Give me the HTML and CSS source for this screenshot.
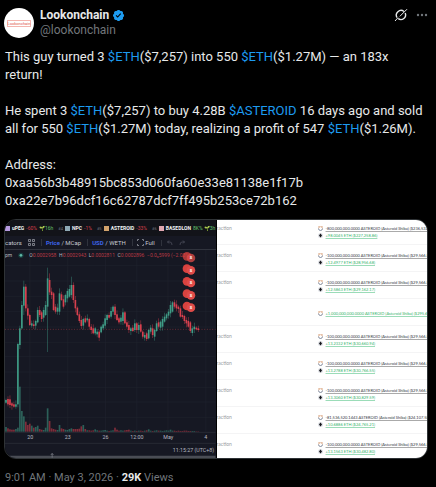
FILE: index.html
```
<!DOCTYPE html>
<html lang="en">
<head>
  <meta charset="UTF-8">
  <meta name="viewport" content="width=device-width, initial-scale=1.0">
  <title>Lookonchain</title>
  <link rel="stylesheet" href="styles.css">
</head>
<body>

  <article class="post">
    <header class="post-header">
      <a class="avatar" href="#"><span>Lookonchain</span></a>
      <div class="author">
        <a class="name" href="#">Lookonchain
          <svg class="verified" viewBox="0 0 22 22" aria-label="Verified account"><path fill="#1d9bf0" d="M20.4 11c0-.65-.18-1.28-.52-1.82-.34-.55-.83-.99-1.41-1.27.21-.6.26-1.26.13-1.9-.13-.63-.44-1.21-.88-1.69-.47-.44-1.05-.75-1.69-.88-.63-.13-1.29-.09-1.9.13-.27-.59-.71-1.08-1.26-1.42S11.71 1.62 11.07 1.6c-.65.02-1.28.2-1.82.55-.54.34-.98.83-1.25 1.42-.6-.22-1.26-.27-1.9-.13-.64.13-1.22.44-1.69.88-.45.48-.75 1.06-.88 1.69-.12.64-.08 1.3.14 1.9-.59.28-1.08.72-1.43 1.27-.34.54-.53 1.17-.55 1.82.02.65.21 1.28.55 1.83.35.54.84.98 1.43 1.26-.22.6-.26 1.26-.14 1.9.13.64.43 1.22.88 1.69.47.44 1.05.75 1.69.88.64.13 1.3.08 1.9-.13.27.59.71 1.08 1.25 1.42.54.34 1.17.53 1.82.54.64-.01 1.28-.2 1.82-.54.55-.34.99-.83 1.26-1.42.61.24 1.27.29 1.91.16.64-.14 1.22-.45 1.68-.91.46-.47.78-1.05.91-1.69.13-.64.09-1.3-.13-1.9.59-.28 1.08-.72 1.42-1.26.34-.55.53-1.18.55-1.83z"/><path fill="#000" d="M9.66 14.85l-3.43-3.43 1.3-1.3 2.07 2.07 4.4-4.79 1.35 1.24z"/></svg>
        </a>
        <a class="handle" href="#">@lookonchain</a>
      </div>
      <button class="icon-btn" aria-label="Explain this post">
        <svg class="grok" viewBox="0 0 14 14" fill="none" stroke="#e7e9ea"><path stroke-width="1.4" d="M10 3.5A4.7 4.7 0 0 0 3.1 9.7M4.2 10.7A4.7 4.7 0 0 0 11.2 5"/><path stroke-width="1" d="M1 13L4 9.7M5.8 8.4L13 1.2"/></svg>
      </button>
      <button class="icon-btn" aria-label="More">
        <svg class="dots" viewBox="0 0 12 4" fill="#71767b"><circle cx="2" cy="2" r="1.2"/><circle cx="6" cy="2" r="1.2"/><circle cx="10" cy="2" r="1.2"/></svg>
      </button>
    </header>

    <div class="post-text">
      <p>This guy turned 3 <a href="#">$ETH</a>($7,257) into 550 <a href="#">$ETH</a>($1.27M) — an 183x return!</p>
      <p>He spent 3 <a href="#">$ETH</a>($7,257) to buy 4.28B <a href="#">$ASTEROID</a> 16 days ago and sold all for 550 <a href="#">$ETH</a>($1.27M) today, realizing a profit of 547 <a href="#">$ETH</a>($1.26M).</p>
      <p>Address:<br>0xaa56b3b48915bc853d060fa60e33e81138e1f17b<br>0xa22e7b96dcf16c62787dcf7ff495b253ce72b162</p>
    </div>

    <div class="media">
      <section class="chart">
        <div class="ticker">
          <span><i class="coin purple"></i><b>uPEG</b> <em class="down">-60%</em> <em class="up">🌱16h</em></span>
          <span><small>#4</small><i class="coin"></i><b>NPC</b> <em class="down">-1%</em></span>
          <span><small>#5</small><i class="coin gold"></i><b>ASTEROID</b> <em class="down">-33%</em></span>
          <span><small>#6</small><i class="coin pink"></i><b>BASEDLON</b> <em class="up">8K% 🌱3h</em></span>
        </div>
        <div class="toolbar">
          <span>cators</span>
          <svg class="grid-icon" viewBox="0 0 7 7" fill="none" stroke="#a3a6af" stroke-width=".7"><path d="M.5.5h2v2h-2zM4.5.5h2v2h-2zM.5 4.5h2v2h-2zM4.5 4.5h2v2h-2z"/></svg>
          <span class="split"><b>Price</b> / MCap</span>
          <span class="split"><b>USD</b> / WETH</span>
          <span class="split"><svg class="grid-icon" viewBox="0 0 7 7" fill="none" stroke="#a3a6af" stroke-width=".7"><path d="M.5 2V.5H2M5 .5h1.5V2M6.5 5v1.5H5M2 6.5H.5V5"/></svg> Full</span>
          <span class="split history">
            <svg viewBox="0 0 20 6" fill="none" stroke="#555864" stroke-width=".7"><path d="M3 .5L1.500 2L3 3.500M1.500 2H4q2 0 2 3M17 .5L18.500 2L17 3.500M18.500 2H16q-2 0-2 3"/></svg>
          </span>
        </div>
        <svg class="plot" id="plot" viewBox="15 105 634 624" preserveAspectRatio="none">
          <path stroke="#20232e" stroke-width="2" d="M90 105V650M204 105V650M318 105V650M412 105V650M506 105V650M620 105V650M15 152H649M15 198H649M15 244H649M15 290H649M15 336H649M15 382H649M15 425H649M15 471H649M15 517H649M15 561H649M15 607H649"/>
          <path stroke="#30333d" stroke-width="2" d="M15 652H649M15 685H649"/>
          <path stroke="#8c3540" stroke-width="2" stroke-dasharray="3 5" d="M15 343H649"/>
          <g id="candles"></g>
          <g class="ohlc">
            <text x="15" y="126">pm</text>
            <circle cx="63" cy="121" r="8" fill="#173c3d"/><circle cx="63" cy="121" r="4" fill="#5fb8a6"/>
            <text x="88" y="126">O<tspan>0.0002958</tspan></text>
            <text x="178" y="126">H<tspan>0.0002943</tspan></text>
            <text x="267" y="126">L<tspan>0.0002811</tspan></text>
            <text x="354" y="126">C<tspan>0.0002896</tspan></text>
            <text x="443" y="126"><tspan>−0.0₅5999 (−2.03%)</tspan></text>
          </g>
          <g id="marks"></g>
          <g class="axis">
            <text x="91" y="673">20</text>
            <text x="204" y="673">23</text>
            <text x="318" y="673">26</text>
            <text x="412" y="673">12:00</text>
            <text x="507" y="673">May</text>
            <text x="620" y="673">4</text>
          </g>
          <text class="clock" x="645" y="711">11:15:27 (UTC+8)</text>
          <path fill="#4a4d55" d="M15 722h634v7H15z"/>
          <path stroke="#8a8d94" stroke-width="2" d="M157 728V716M153 720L157 715L161 720" fill="none"/>
        </svg>
      </section>

      <section class="transfers" id="transfers"></section>
    </div>

    <footer class="meta">
      <a href="#">9:01 AM · May 3, 2026</a> · <b>29K</b> Views
    </footer>
  </article>

  <script src="script.js"></script>
</body>
</html>
```
FILE: styles.css
```
* {
  box-sizing: border-box;
}
body {
  margin: 0;
  background: #000;
  color: #e7e9ea;
  font-family: Roboto, "Liberation Sans", sans-serif;
  font-size: 13px;
  line-height: 18px;
}
a {
  color: inherit;
  text-decoration: none;
}
p {
  margin: 0;
}
.post {
  padding: 8px 8px 0 4px;
}
.post-header {
  display: flex;
  align-items: flex-start;
}
.avatar {
  width: 30px;
  height: 30px;
  border-radius: 50%;
  background: #fff;
  display: flex;
  align-items: center;
  justify-content: center;
  overflow: hidden;
}
.avatar span {
  border: 1px solid #f4b5ae;
  color: #e0584c;
  font-size: 4px;
  line-height: 5px;
}
.author {
  flex: 1;
  margin-left: 6px;
  font-size: 12px;
  line-height: 15px;
}
.name {
  display: flex;
  align-items: center;
  gap: 3px;
  font-weight: 700;
}
.verified {
  width: 13px;
  height: 13px;
}
.handle {
  color: #71767b;
}
.icon-btn {
  background: none;
  border: none;
  padding: 0;
  margin-left: 8px;
  height: 14px;
  display: flex;
  align-items: center;
  cursor: pointer;
}
.grok {
  width: 14px;
  height: 14px;
}
.dots {
  width: 12px;
  height: 4px;
}
.post-text {
  margin-top: 10px;
  padding-left: 1px;
}
.post-text p + p {
  margin-top: 18px;
}
.post-text a {
  color: #1d9bf0;
}
.media {
  margin-top: 9px;
  border: 1px solid #2f3336;
  border-radius: 12px;
  overflow: hidden;
  display: grid;
  grid-template-columns: 1fr 1fr;
  gap: 1px;
  aspect-ratio: 424 / 240;
}
.chart {
  background: #161823;
  display: flex;
  flex-direction: column;
  min-width: 0;
  min-height: 0;
  color: #c5c8d0;
  font-size: 5px;
  line-height: 7px;
  white-space: nowrap;
  overflow: hidden;
}
.ticker {
  height: 16px;
  background: #121319;
  display: flex;
  align-items: center;
  gap: 5px;
}
.ticker span {
  display: flex;
  align-items: center;
  gap: 2px;
}
.ticker b {
  color: #f2f3f5;
}
.ticker em {
  font-style: normal;
}
.ticker small {
  font-size: 4px;
  color: #6d707a;
}
.up {
  color: #63c16b;
}
.down {
  color: #d33f49;
}
.coin {
  width: 5px;
  height: 5px;
  background: #8fa9b5;
}
.purple {
  background: #b69be0;
}
.gold {
  background: #d3a36c;
}
.pink {
  background: #e0a7b0;
}
.toolbar {
  height: 14px;
  border-bottom: 1px solid #30333d;
  display: flex;
  align-items: center;
  gap: 6px;
  font-size: 6px;
}
.toolbar b {
  color: #3d63e8;
}
.split {
  border-left: 1px solid #30333d;
  padding-left: 4px;
}
.grid-icon {
  width: 7px;
  height: 7px;
  vertical-align: middle;
}
.history svg {
  display: block;
  width: 20px;
  height: 6px;
}
.plot {
  flex: 1;
  width: 100%;
  min-height: 0;
}
.plot text {
  fill: #b6b9c1;
  font-size: 16px;
}
.plot .ohlc text {
  font-size: 15px;
}
.plot .ohlc tspan {
  fill: #b93844;
}
.axis text {
  text-anchor: middle;
}
.plot .clock {
  text-anchor: end;
}
.plot .mark {
  fill: #fff;
  font-size: 12px;
  font-weight: 700;
  text-anchor: middle;
}
.transfers {
  background: #fff;
  min-width: 0;
  min-height: 0;
  overflow: hidden;
  display: flex;
  flex-direction: column;
  justify-content: center;
  color: #34383f;
  font-family: Lato, sans-serif;
  font-size: 4px;
  line-height: 7px;
  white-space: nowrap;
}
.transfer {
  flex: none;
  height: 27px;
  border-bottom: 1px solid #f4f4f5;
  display: grid;
  grid-template-columns: 48% 52%;
  padding-top: 7px;
}
.transfer.single {
  padding-top: 11px;
}
.label {
  color: #9a9da3;
  font-size: 5px;
}
.amount {
  display: flex;
  align-items: center;
  gap: 3px;
}
.amount a {
  text-decoration: underline;
  text-decoration-color: #aaa;
}
.amount .in {
  color: #35b36b;
  text-decoration-color: #9bdcb8;
}
.token {
  flex: none;
  width: 5px;
  height: 5px;
}
.meta {
  margin-top: 10px;
  padding-left: 1px;
  font-size: 11px;
  color: #71767b;
}
.meta b {
  color: #e7e9ea;
}
```
FILE: script.js
```
const SVG = 'http://www.w3.org/2000/svg';
const UP = '#3f9c86';
const DOWN = '#d8404e';

function add(parent, tag, attrs) {
  const el = document.createElementNS(SVG, tag);
  for (const key in attrs) el.setAttribute(key, attrs[key]);
  parent.appendChild(el);
  return el;
}

// direction, body top, body bottom, one entry per candle
const candles = `g555,563 r552,568 r553,570 r565,572 r568,575 g568,575 g387,568 g340,390 g270,340 g215,272
r215,280 r280,302 r300,330 g325,332 r328,333 g318,332 g285,322 r285,300 r292,312 g285,308 g270,300 g190,275
r195,232 r230,240 r235,285 r275,290 g278,290 g235,290 r238,255 r253,275 g240,262 g228,250 g222,245 g210,240
r210,255 r255,280 r278,300 r298,318 r315,333 g312,332 r310,322 g310,316 r312,335 r335,345 r340,355 g340,355
g350,358 r350,368 g335,352 g328,340 g310,332 g300,315 r300,308 g288,305 g275,290 r275,300 r298,315 r310,322
g308,320 g292,318 r292,325 r322,335 r330,345 g340,348 r338,348 g325,345 r325,345 g330,345 r328,350 r350,365
g360,368 r355,372 g345,370 g338,350 r340,360 g345,365 g325,348 r322,335 g320,338 g312,335 g305,320 g298,310
g290,302 g270,295 g262,290 r262,275 r268,280 r275,282 r280,305 r300,306 r303,318 r315,325 r318,335 r322,348
g340,354 g335,342 r338,343 r340,345`.split(/\s+/);

const volumes = [14, 10, 7, 6, 6, 8, 12, 135, 62, 46, 30, 20, 24, 18, 12, 14, 18, 8, 6, 5, 12, 70,
  32, 10, 8, 6, 5, 20, 10, 8, 6, 5, 8, 10, 8, 8, 8, 9, 16, 20, 8, 4, 4, 3, 4, 7, 4, 3, 3, 4, 5,
  3, 2, 3, 4, 12, 6, 3, 4, 3, 4, 5, 6, 3, 2, 3, 2, 3, 3, 2, 3, 4, 7, 3, 2, 3, 4, 3, 3, 2, 3, 4,
  3, 6, 3, 3, 2, 3, 2, 2, 3, 3, 2, 2, 2, 2, 1, 1];

const tall = { 9: [197, 300], 21: [158, 411], 27: [220, 300], 33: [185, 250], 22: [175, 240], 47: [345, 378], 71: [350, 378] };

const group = document.getElementById('candles');
candles.forEach((c, i) => {
  const color = c[0] === 'g' ? UP : DOWN;
  const [top, bottom] = c.slice(1).split(',').map(Number);
  const x = 18 + i * 5.97;
  const [high, low] = tall[i] || [top - 4 - i % 3 * 4, bottom + 3 + i % 4 * 3];
  add(group, 'rect', { x: x - 1, y: high, width: 2, height: low - high, fill: color, opacity: 0.6 });
  add(group, 'rect', { x: x - 2.5, y: top, width: 5, height: bottom - top, fill: color });
  add(group, 'rect', { x: x - 2.5, y: 650 - volumes[i], width: 5, height: volumes[i], fill: color, opacity: 0.55 });
});

// sell markers
const marks = document.getElementById('marks');
[126, 163, 201, 238, 275].forEach((y, i) => {
  const opacity = i ? 1 : 0.75;
  add(marks, 'circle', { cx: 563, cy: y - 2, r: 13, fill: '#d9423f', opacity });
  add(marks, 'circle', { cx: 575, cy: y + 3, r: 13, fill: '#e04b48', opacity });
  add(marks, 'text', { x: 575, y: y + 7, class: 'mark' }).textContent = 'S';
});

const transfers = [
  ['raction', '-800,000,000.0000 ASTEROID (Asteroid Shiba) ($236,532.66)', '+98.0045 ETH ($227,258.86)'],
  ['raction', '-100,000,000.0000 ASTEROID (Asteroid Shiba) ($29,566.58)', '+12.4977 ETH ($28,956.68)'],
  ['raction', '-100,000,000.0000 ASTEROID (Asteroid Shiba) ($29,566.58)', '+12.5863 ETH ($29,162.17)'],
  ['', '+1,000,000,000.0000 ASTEROID (Asteroid Shiba) ($295,665.83)', ''],
  ['raction', '-100,000,000.0000 ASTEROID (Asteroid Shiba) ($29,566.58)', '+13.2332 ETH ($30,660.94)'],
  ['raction', '-100,000,000.0000 ASTEROID (Asteroid Shiba) ($29,566.58)', '+13.2788 ETH ($30,766.55)'],
  ['raction', '-100,000,000.0000 ASTEROID (Asteroid Shiba) ($29,566.58)', '+13.3060 ETH ($30,829.59)'],
  ['raction', '-81,536,520.1443 ASTEROID (Asteroid Shiba) ($24,107.58)', '+10.6886 ETH ($24,765.21)'],
  ['raction', '-100,000,000.0000 ASTEROID (Asteroid Shiba) ($29,566.58)', '+13.1563 ETH ($30,482.80)']
];

const shiba = '<svg class="token" viewBox="0 0 10 10"><path fill="#d9a27c" d="M1 0l3 1h2l3-1v5H1z"/><circle cx="5" cy="5" r="3" fill="#fff"/><path fill="none" stroke="#59657c" stroke-width="1.4" d="M1 5a4 4 0 0 0 8 0"/></svg>';
const eth = '<svg class="token" viewBox="0 0 10 10"><circle cx="5" cy="5" r="5" fill="#dfe1e6"/><path fill="#15171c" d="M5 1l3 4-3 4-3-4z"/></svg>';

document.getElementById('transfers').innerHTML = transfers.map(([label, main, eths]) => `
  <div class="transfer${eths ? '' : ' single'}">
    <span class="label">${label}</span>
    <div>
      <div class="amount">${shiba}<a href="#"${eths ? '' : ' class="in"'}>${main}</a></div>
      ${eths ? `<div class="amount">${eth}<a href="#" class="in">${eths}</a></div>` : ''}
    </div>
  </div>`).join('');
```
